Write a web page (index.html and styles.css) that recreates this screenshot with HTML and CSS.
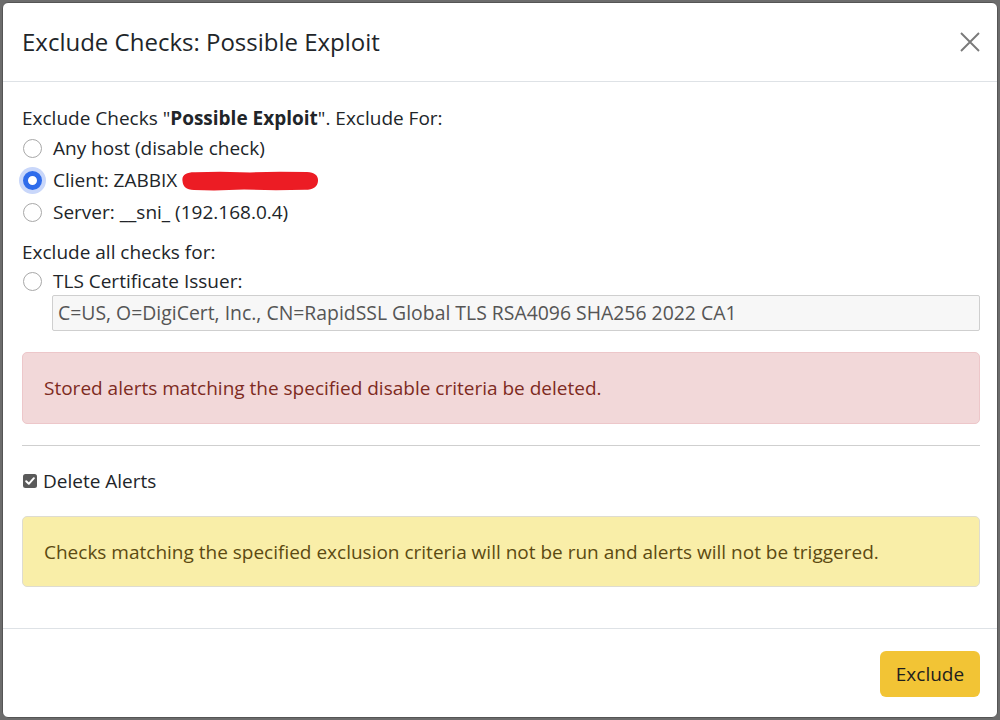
FILE: index.html
```html
<!DOCTYPE html>
<html>
<head>
<meta charset="utf-8">
<link rel="stylesheet" href="styles.css">
</head>
<body>
<div class="page">
  <div class="modal">
    <div class="modal-header">
      <h5 class="modal-title">Exclude Checks: Possible Exploit</h5>
      <button class="btn-close" aria-label="Close">
        <svg width="20" height="20" viewBox="0 0 20 20"><path d="M1 1 L19 19 M19 1 L1 19" stroke="#7a7a7a" stroke-width="1.9" fill="none"/></svg>
      </button>
    </div>
    <div class="modal-body">
      <p class="intro">Exclude Checks "<b>Possible Exploit</b>". Exclude For:</p>
      <div class="radio-row"><span class="radio"></span><span>Any host (disable check)</span></div>
      <div class="radio-row"><span class="radio checked"></span><span>Client: ZABBIX <svg class="redact" width="139" height="20" viewBox="0 0 139 20"><path d="M2.5 10 C1.5 3.5 7 1 15 1.2 L40 0.8 L70 1.4 L100 0.7 L127 1 C135 1.2 138.5 5 138 10 C137.6 15.5 133.5 18.8 125 18.8 L96 19.3 L64 18.6 L34 19.4 L14 19 C6 18.8 3 15.5 2.5 10 Z" fill="#ec1c24"/></svg></span></div>
      <div class="radio-row"><span class="radio"></span><span>Server: __sni_ (192.168.0.4)</span></div>
      <div class="section-label">Exclude all checks for:</div>
      <div class="radio-row tls"><span class="radio"></span><span>TLS Certificate Issuer:</span></div>
      <div class="issuer">C=US, O=DigiCert, Inc., CN=RapidSSL Global TLS RSA4096 SHA256 2022 CA1</div>
      <div class="alert alert-danger">Stored alerts matching the specified disable criteria be deleted.</div>
      <hr class="divider">
      <div class="check-row">
        <svg class="checkbox" width="14" height="14" viewBox="0 0 14 14"><rect x="0" y="0" width="14" height="14" rx="2.5" fill="#5a5a5a"/><path d="M3.2 7.3 L5.8 9.8 L10.9 4.2" stroke="#fff" stroke-width="2" fill="none" stroke-linecap="round" stroke-linejoin="round"/></svg>
        <span>Delete Alerts</span>
      </div>
      <div class="alert alert-warning">Checks matching the specified exclusion criteria will not be run and alerts will not be triggered.</div>
    </div>
    <div class="modal-footer">
      <button class="btn-exclude">Exclude</button>
    </div>
  </div>
</div>
</body>
</html>
```
FILE: styles.css
```css
html, body {
  margin: 0;
  padding: 0;
  height: 100%;
}
body {
  background: #6c6c6c;
  font-family: "Open Sans", "Noto Sans", sans-serif;
  font-size: 19px;
  line-height: 24px;
  color: #212529;
}
.page {
  padding: 2px 0 0 2px;
}
.modal {
  width: 996px;
  height: 716px;
  box-sizing: border-box;
  background: #fff;
  border: 1px solid #555;
  border-radius: 6px;
  display: flex;
  flex-direction: column;
  overflow: hidden;
}
.modal-header {
  height: 79px;
  box-sizing: border-box;
  border-bottom: 1px solid #dee2e6;
  display: flex;
  align-items: center;
  justify-content: space-between;
  padding: 0 17px 0 19px;
  flex: none;
}
.modal-title {
  margin: 0;
  font-size: 24px;
  font-weight: 500;
  line-height: 30px;
}
.btn-close {
  border: 0;
  background: transparent;
  padding: 0;
  width: 20px;
  height: 20px;
  display: flex;
}
.modal-body {
  flex: 1;
  padding: 24px 17px 0 19px;
}
.intro {
  margin: 0 0 6px;
}
.radio-row {
  display: flex;
  align-items: center;
  height: 24px;
  margin-bottom: 8px;
}
.radio {
  width: 19px;
  height: 19px;
  box-sizing: border-box;
  border: 1px solid #a8a8a8;
  border-radius: 50%;
  margin-left: 0.5px;
  margin-right: 11.5px;
  flex: none;
  background: #fff;
}
.radio.checked {
  border: 5.5px solid #2f6ceb;
  background: #fff;
  box-shadow: 0 0 0 4px #c9d7fa;
}
.redact {
  vertical-align: -4px;
  margin-left: -2px;
}
.section-label {
  margin-top: 16px;
}
.radio-row.tls {
  margin-top: 5px;
  margin-bottom: 2px;
}
.issuer {
  margin-left: 30px;
  height: 36px;
  box-sizing: border-box;
  border: 1px solid #cfcfcf;
  border-radius: 2px;
  background: #f7f7f7;
  color: #555;
  padding: 0 5px;
  line-height: 34px;
  font-size: 19.4px;
}
.alert {
  box-sizing: border-box;
  border: 1px solid transparent;
  border-radius: 5px;
  padding: 23px 21px;
  height: 72px;
}
.alert-danger {
  margin-top: 21px;
  background: #f2d8d9;
  border-color: #edc7ca;
  color: #7e2b22;
}
.divider {
  margin: 21px 0 0;
  border: 0;
  border-top: 1px solid #cfcfcf;
  height: 0;
}
.check-row {
  margin-top: 23px;
  display: flex;
  align-items: center;
  height: 24px;
}
.checkbox {
  margin-left: 1px;
  margin-right: 6px;
  flex: none;
}
.alert-warning {
  margin-top: 23px;
  height: 71px;
  padding-bottom: 22px;
  background: #f9eea8;
  border-color: #dedcd0;
  color: #5c4a12;
}
.modal-footer {
  flex: none;
  height: 89px;
  box-sizing: border-box;
  border-top: 1px solid #dee2e6;
  padding: 22px 17px 0 0;
  display: flex;
  justify-content: flex-end;
  align-items: flex-start;
}
.btn-exclude {
  width: 100px;
  height: 46px;
  border: 0;
  border-radius: 6px;
  background: #f2c435;
  color: #1e1e1e;
  font-family: inherit;
  font-size: 19px;
  padding: 0;
}
```
